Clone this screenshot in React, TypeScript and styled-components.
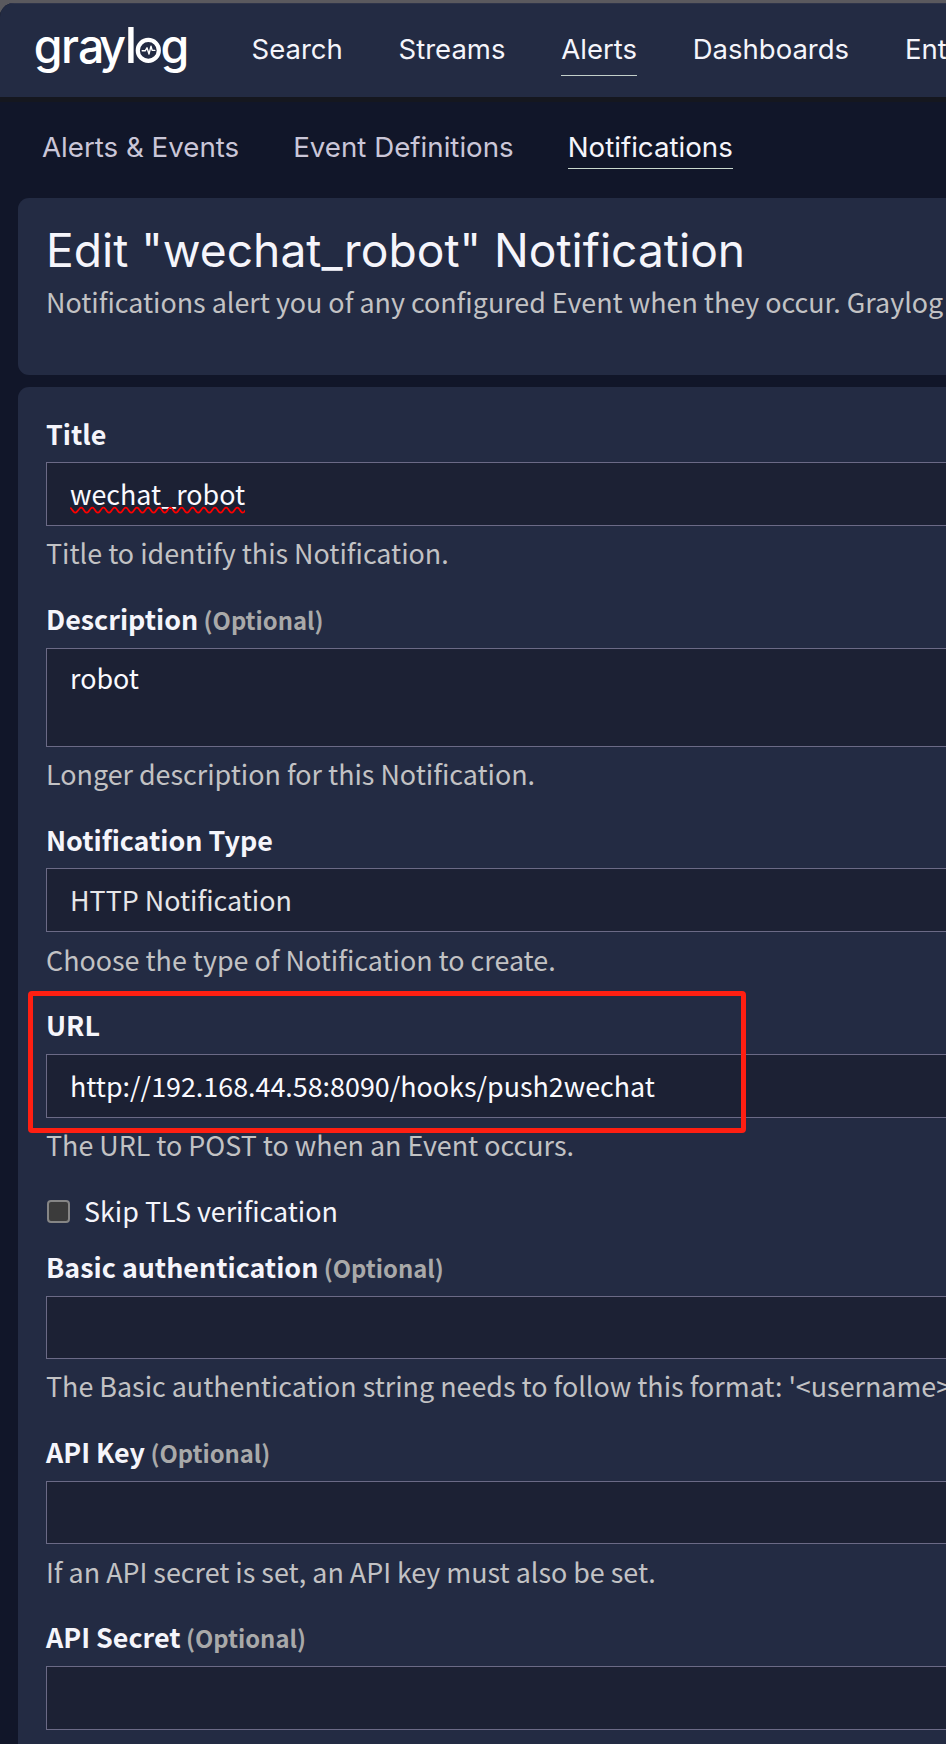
import React from "react";
import styled, { createGlobalStyle } from "styled-components";

const BODY_FONT = '"Noto Sans CJK SC", "Noto Sans", sans-serif';
const HEAD_FONT = 'Inter, "Liberation Sans", sans-serif';

const GlobalStyle = createGlobalStyle`
  * { box-sizing: border-box; }
  html { background: #5a595e; }
  body {
    margin: 0;
    height: 1744px;
    overflow: hidden;
    font: 400 26.87px/40px ${BODY_FONT};
    color: #f5f5fb;
  }
`;

const Window = styled.div`
  margin-top: 3px;
  height: 1741px;
  overflow: hidden;
  border-top-left-radius: 14px;
  background: #111629;
`;

const NavBar = styled.header`
  display: flex;
  align-items: flex-start;
  height: 94px;
  padding-left: 33px;
  background: #232b43;
  border-top: 1px solid #2e344a;
  box-shadow: 0 5px 0 #15171f;
  white-space: nowrap;
`;

const LogoMark = styled.svg`
  flex: none;
  width: 156px;
  height: 60px;
  margin-top: 16px;
  overflow: visible;
`;

const LogoText = styled.text<{ $size?: number }>`
  font: 500 ${(p) => p.$size ?? 46.5}px ${HEAD_FONT};
  fill: #fff;
`;

const NavLinks = styled.nav`
  display: flex;
  flex: none;
  gap: 55.8px;
  margin: 29px 0 0 62.5px;
`;

const NavLink = styled.a<{ $active?: boolean }>`
  height: 43px;
  border-bottom: 1px solid ${(p) => (p.$active ? "#c3cfca" : "transparent")};
  font: 400 27.5px/32px ${HEAD_FONT};
`;

const SubNav = styled.nav`
  display: flex;
  gap: 54px;
  height: 101px;
  padding: 35px 0 0 42px;
  white-space: nowrap;
`;

const SubLink = styled.a<{ $active?: boolean }>`
  height: 37px;
  border-bottom: 1px solid ${(p) => (p.$active ? "#c9d8ce" : "transparent")};
  color: ${(p) => (p.$active ? "#f5f5fb" : "#cac6d8")};
  font: 400 27.7px/30px ${HEAD_FONT};
`;

const Main = styled.main`
  display: flex;
  flex-direction: column;
  gap: 12px;
  padding-left: 18px;
`;

const Card = styled.section<{ $height: number }>`
  height: ${(p) => p.$height}px;
  padding-left: 28px;
  border-top-left-radius: 11px;
  border-bottom-left-radius: 11px;
  background: #232b43;
  white-space: nowrap;
`;

const Heading = styled.h1`
  margin: 0;
  padding-top: 26px;
  font: 400 46.2px/52px ${HEAD_FONT};
`;

const Note = styled.p<{ $top: number }>`
  margin: ${(p) => p.$top}px 0 0;
  color: #c2c2c4;
`;

const FieldGroup = styled.div<{ $top: number }>`
  position: relative;
  padding-top: ${(p) => p.$top}px;
`;

const Label = styled.div`
  height: 40px;
  font-weight: 700;
`;

const Optional = styled.span`
  color: #a9a9a9;
  font-size: 23.8px;
  line-height: 1;
`;

const Control = styled.div<{ $top: number; $height: number; $muted?: boolean }>`
  position: relative;
  height: ${(p) => p.$height}px;
  margin-top: ${(p) => p.$top}px;
  padding: 11px 0 0 23px;
  border: 1px solid #6b6a86;
  border-right: 0;
  background: #1c2134;
  color: ${(p) => (p.$muted ? "#e6e6e8" : "#fafaff")};
`;

const TextArea = styled(Control)`
  padding-top: 9px;
`;

const Squiggle = styled.svg`
  position: absolute;
  left: 23px;
  top: 43px;
  width: 175px;
  height: 9px;
`;

const Highlight = styled.div`
  position: absolute;
  left: -18px;
  top: 10.5px;
  width: 718px;
  height: 142px;
  border: 5px solid #ff1f12;
  border-radius: 4px;
`;

const CheckRow = styled.label`
  display: flex;
  align-items: center;
  height: 40px;
  margin-top: 26px;
  padding-left: 1px;
`;

const CheckBox = styled.span`
  width: 23px;
  height: 23px;
  margin: 0 14px 0 0;
  border: 2px solid #858585;
  border-radius: 4px;
  background: #3b3b3b;
`;

interface FieldProps {
  label: string;
  optional?: boolean;
  help?: string;
  top?: number;
  labelGap?: number;
  height?: number;
  helpGap?: number;
  multiline?: boolean;
  muted?: boolean;
  highlighted?: boolean;
  children?: React.ReactNode;
}

function Field({
  label, optional, help, top = 26, labelGap = 9, height = 64, helpGap = 7,
  multiline, muted, highlighted, children,
}: FieldProps) {
  const Box = multiline ? TextArea : Control;
  return (
    <FieldGroup $top={top}>
      <Label>
        {label}
        {optional && <Optional> (Optional)</Optional>}
      </Label>
      <Box $top={labelGap} $height={height} $muted={muted}>{children}</Box>
      {help && <Note $top={helpGap}>{help}</Note>}
      {highlighted && <Highlight />}
    </FieldGroup>
  );
}

function Logo() {
  return (
    <LogoMark viewBox="33 20 156 60">
      <LogoText x="33.7 61 78 99.3" y="63">gray</LogoText>
      <LogoText x="124.7" y="63" $size={49}>l</LogoText>
      <circle cx="148.3" cy="50.4" r="10.5" fill="none" stroke="#fff" strokeWidth="4.2" />
      <path
        d="M142.2 50.8h3l1.8-3 2 6.2 2-7.8 1.2 4.2h2.6"
        fill="none" stroke="#fff" strokeWidth="1.4" strokeLinejoin="round" strokeLinecap="round"
      />
      <LogoText x="160.6" y="63">g</LogoText>
    </LogoMark>
  );
}

const squigglePath =
  "M0.3 1.5 L3.6 5.6 Q5.4 7.6 7 5.6 L9.4 2.8 " +
  Array.from({ length: 15 }, (_, i) => {
    const x = 11.15 + i * 11.15;
    return `Q${x} 0.6 ${x + 1.8} 2.8 L${x + 3.8} 5.6 Q${x + 5.6} 7.6 ${x + 7.3} 5.6 L${x + 9.4} 2.8`;
  }).join(" ");

export default function App() {
  return (
    <>
      <GlobalStyle />
      <Window>
        <NavBar>
          <Logo />
          <NavLinks>
            <NavLink>Search</NavLink>
            <NavLink>Streams</NavLink>
            <NavLink $active>Alerts</NavLink>
            <NavLink>Dashboards</NavLink>
            <NavLink>Enterprise</NavLink>
          </NavLinks>
        </NavBar>
        <SubNav>
          <SubLink>Alerts &amp; Events</SubLink>
          <SubLink>Event Definitions</SubLink>
          <SubLink $active>Notifications</SubLink>
        </SubNav>
        <Main>
          <Card $height={177}>
            <Heading>Edit "wechat_robot" Notification</Heading>
            <Note $top={6}>Notifications alert you of any configured Event when they occur. Graylog</Note>
          </Card>
          <Card $height={1400}>
            <Field label="Title" top={27} labelGap={8} help="Title to identify this Notification.">
              wechat_robot
              <Squiggle viewBox="0 0 175 9">
                <path d={squigglePath} fill="none" stroke="#ff0000" strokeWidth="1.7" />
              </Squiggle>
            </Field>
            <Field label="Description" optional multiline height={99} help="Longer description for this Notification.">
              robot
            </Field>
            <Field label="Notification Type" labelGap={8} helpGap={8} muted help="Choose the type of Notification to create.">
              HTTP Notification
            </Field>
            <Field label="URL" top={25} highlighted help="The URL to POST to when an Event occurs.">
              http://192.168.44.58:8090/hooks/push2wechat
            </Field>
            <CheckRow>
              <CheckBox />
              Skip TLS verification
            </CheckRow>
            <Field
              label="Basic authentication" optional top={16} height={63}
              help="The Basic authentication string needs to follow this format: '<username>:<password>'"
            />
            <Field label="API Key" optional height={63} helpGap={8} help="If an API secret is set, an API key must also be set." />
            <Field label="API Secret" optional top={25} />
          </Card>
        </Main>
      </Window>
    </>
  );
}
